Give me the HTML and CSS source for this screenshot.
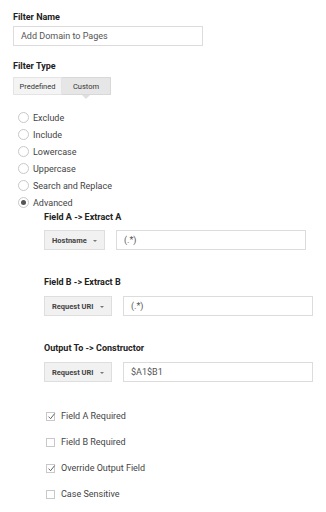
FILE: index.html
```html
<!DOCTYPE html>
<html>
<head>
<meta charset="utf-8">
<link rel="stylesheet" href="styles.css">
</head>
<body>
<div class="page">
  <div class="label">Filter Name</div>
  <div class="input name-input">Add Domain to Pages</div>

  <div class="label type-label">Filter Type</div>
  <div class="tabs">
    <div class="tab">Predefined</div>
    <div class="tab active">Custom</div>
  </div>

  <div class="radios">
    <div class="radio"><span class="circle"></span>Exclude</div>
    <div class="radio"><span class="circle"></span>Include</div>
    <div class="radio"><span class="circle"></span>Lowercase</div>
    <div class="radio"><span class="circle"></span>Uppercase</div>
    <div class="radio"><span class="circle"></span>Search and Replace</div>
    <div class="radio"><span class="circle checked"></span>Advanced</div>
  </div>

  <div class="advanced">
    <div class="label sub-label first">Field A -&gt; Extract A</div>
    <div class="row first-row">
      <div class="select w61">Hostname<span class="arrow"></span></div>
      <div class="input field">(.*)</div>
    </div>

    <div class="label sub-label">Field B -&gt; Extract B</div>
    <div class="row">
      <div class="select w68">Request URI<span class="arrow"></span></div>
      <div class="input field">(.*)</div>
    </div>

    <div class="label sub-label">Output To -&gt; Constructor</div>
    <div class="row">
      <div class="select w68">Request URI<span class="arrow"></span></div>
      <div class="input field">$A1$B1</div>
    </div>

    <div class="checks">
      <div class="check"><span class="box"><svg viewBox="0 0 9 9" width="9" height="9"><path d="M1.5 4.6 L3.6 6.7 L7.6 1.6" fill="none" stroke="#555" stroke-width="0.9"/></svg></span>Field A Required</div>
      <div class="check"><span class="box"></span>Field B Required</div>
      <div class="check"><span class="box"><svg viewBox="0 0 9 9" width="9" height="9"><path d="M1.5 4.6 L3.6 6.7 L7.6 1.6" fill="none" stroke="#555" stroke-width="0.9"/></svg></span>Override Output Field</div>
      <div class="check"><span class="box"></span>Case Sensitive</div>
    </div>
  </div>
</div>
</body>
</html>
```

FILE: styles.css
```css
html, body {
  margin: 0;
  padding: 0;
  background: #fff;
}
body {
  font-family: Roboto, "Liberation Sans", sans-serif;
  font-size: 9px;
  color: #444;
}
.page {
  padding: 12px 0 0 13px;
  display: flex;
  flex-direction: column;
  align-items: flex-start;
}
.label {
  font-weight: bold;
  color: #222;
  font-size: 9px;
  line-height: 11px;
}
.input {
  box-sizing: border-box;
  border: 1px solid #dcdcdc;
  background: #fff;
  color: #555;
  font-size: 9px;
  display: flex;
  align-items: center;
  padding-left: 7px;
}
.name-input {
  margin-top: 3px;
  width: 190px;
  height: 20px;
}
.type-label {
  margin-top: 15px;
}
.tabs {
  margin-top: 5px;
  display: flex;
  position: relative;
}
.tab {
  box-sizing: border-box;
  height: 18px;
  width: 49px;
  display: flex;
  align-items: center;
  justify-content: center;
  font-size: 7.5px;
  color: #333;
  background: #f4f4f4;
  border: 1px solid #e4e4e4;
}
.tab.active {
  background: #e6e6e6;
  border-color: #d8d8d8;
  border-left: none;
  position: relative;
}
.tab.active::after {
  content: "";
  position: absolute;
  left: 50%;
  top: 17px;
  margin-left: -4px;
  border-left: 4px solid transparent;
  border-right: 4px solid transparent;
  border-top: 4px solid #e0e0e0;
}
.radios {
  margin-top: 17px;
  display: flex;
  flex-direction: column;
  gap: 6px;
  padding-left: 5px;
}
.radio {
  display: flex;
  align-items: center;
  height: 11px;
  color: #444;
}
.circle {
  box-sizing: border-box;
  width: 11px;
  height: 11px;
  border-radius: 50%;
  border: 1px solid #c8c8c8;
  margin-right: 4px;
  display: flex;
  align-items: center;
  justify-content: center;
}
.circle.checked::after {
  content: "";
  width: 5px;
  height: 5px;
  border-radius: 50%;
  background: #555;
}
.advanced {
  padding-left: 31px;
  display: flex;
  flex-direction: column;
  align-items: flex-start;
}
.sub-label {
  margin-top: 27px;
}
.sub-label.first {
  margin-top: 4px;
}
.row {
  margin-top: 8px;
  display: flex;
  gap: 11px;
  height: 20px;
}
.row.first-row {
  margin-top: 7px;
}
.select {
  box-sizing: border-box;
  height: 20px;
  background: #f1f1f1;
  border: 1px solid #dedede;
  font-weight: bold;
  font-size: 7.5px;
  color: #444;
  display: flex;
  align-items: center;
  padding-left: 7px;
  position: relative;
}
.w61 { width: 61px; }
.w68 { width: 68px; }
.arrow {
  position: absolute;
  right: 7px;
  top: 9px;
  border-left: 2.5px solid transparent;
  border-right: 2.5px solid transparent;
  border-top: 2.5px solid #777;
}
.field {
  width: 190px;
  height: 20px;
}
.checks {
  margin-top: 29px;
  display: flex;
  flex-direction: column;
  gap: 16px;
}
.check {
  display: flex;
  align-items: center;
  height: 10px;
  color: #444;
}
.box {
  box-sizing: border-box;
  width: 9px;
  height: 9px;
  border: 1px solid #c8c8c8;
  margin: 0 6px 0 2px;
  display: flex;
  align-items: center;
  justify-content: center;
  position: relative;
}
.box svg {
  position: absolute;
  left: 0;
  top: -1px;
}
```
